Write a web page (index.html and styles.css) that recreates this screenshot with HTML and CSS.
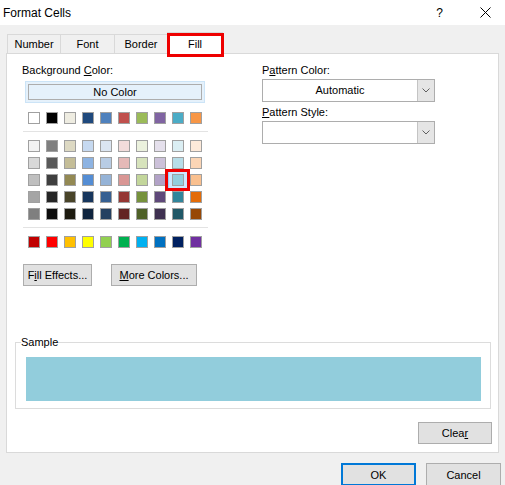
FILE: index.html
```html
<!DOCTYPE html>
<html>
<head>
<meta charset="utf-8">
<title>Format Cells</title>
<link rel="stylesheet" href="styles.css">
</head>
<body>
<div class="titlebar">
  <span class="title">Format Cells</span>
  <span class="help">?</span>
  <span class="close"><svg width="11" height="11" viewBox="0 0 11 11"><path d="M0.5 0.5L10.5 10.5M10.5 0.5L0.5 10.5" stroke="#000" stroke-width="1" fill="none"/></svg></span>
</div>
<div class="tabs">
  <div class="tab t-number">Number</div>
  <div class="tab t-font">Font</div>
  <div class="tab t-border">Border</div>
  <div class="tab t-fill active">Fill<span class="tab-mark"></span></div>
</div>
<div class="panel">
  <div class="top">
    <div class="left">
      <div class="label">Background <u>C</u>olor:</div>
      <div class="nocolor"><div class="nocolor-inner">No Color</div></div>
      <div class="swatches theme">
        <div class="sw" style="background:#FFFFFF"></div>
        <div class="sw" style="background:#000000"></div>
        <div class="sw" style="background:#EEECE1"></div>
        <div class="sw" style="background:#1F497D"></div>
        <div class="sw" style="background:#4F81BD"></div>
        <div class="sw" style="background:#C0504D"></div>
        <div class="sw" style="background:#9BBB59"></div>
        <div class="sw" style="background:#8064A2"></div>
        <div class="sw" style="background:#4BACC6"></div>
        <div class="sw" style="background:#F79646"></div>
      </div>
      <div class="sep"></div>
      <div class="swatches tints">
        <div class="sw" style="background:#F2F2F2"></div>
        <div class="sw" style="background:#7F7F7F"></div>
        <div class="sw" style="background:#DDD9C3"></div>
        <div class="sw" style="background:#C6D9F0"></div>
        <div class="sw" style="background:#DBE5F1"></div>
        <div class="sw" style="background:#F2DCDB"></div>
        <div class="sw" style="background:#EBF1DD"></div>
        <div class="sw" style="background:#E5E0EC"></div>
        <div class="sw" style="background:#DBEEF3"></div>
        <div class="sw" style="background:#FDEADA"></div>

        <div class="sw" style="background:#D8D8D8"></div>
        <div class="sw" style="background:#595959"></div>
        <div class="sw" style="background:#C4BD97"></div>
        <div class="sw" style="background:#8DB3E2"></div>
        <div class="sw" style="background:#B8CCE4"></div>
        <div class="sw" style="background:#E5B9B7"></div>
        <div class="sw" style="background:#D7E3BC"></div>
        <div class="sw" style="background:#CCC1D9"></div>
        <div class="sw" style="background:#B7DDE8"></div>
        <div class="sw" style="background:#FBD5B5"></div>

        <div class="sw" style="background:#BFBFBF"></div>
        <div class="sw" style="background:#3F3F3F"></div>
        <div class="sw" style="background:#938953"></div>
        <div class="sw" style="background:#548DD4"></div>
        <div class="sw" style="background:#95B3D7"></div>
        <div class="sw" style="background:#D99694"></div>
        <div class="sw" style="background:#C3D69B"></div>
        <div class="sw" style="background:#B2A2C7"></div>
        <div class="sw sel" style="background:#92CDDC"><span class="sel-mark"></span></div>
        <div class="sw" style="background:#FAC08F"></div>

        <div class="sw" style="background:#A5A5A5"></div>
        <div class="sw" style="background:#262626"></div>
        <div class="sw" style="background:#494429"></div>
        <div class="sw" style="background:#17365D"></div>
        <div class="sw" style="background:#366092"></div>
        <div class="sw" style="background:#953734"></div>
        <div class="sw" style="background:#76923C"></div>
        <div class="sw" style="background:#5F497A"></div>
        <div class="sw" style="background:#31859B"></div>
        <div class="sw" style="background:#E36C09"></div>

        <div class="sw" style="background:#7F7F7F"></div>
        <div class="sw" style="background:#0C0C0C"></div>
        <div class="sw" style="background:#1D1B10"></div>
        <div class="sw" style="background:#0F243E"></div>
        <div class="sw" style="background:#244061"></div>
        <div class="sw" style="background:#632423"></div>
        <div class="sw" style="background:#4F6128"></div>
        <div class="sw" style="background:#3F3151"></div>
        <div class="sw" style="background:#205867"></div>
        <div class="sw" style="background:#974806"></div>
      </div>
      <div class="sep"></div>
      <div class="swatches std">
        <div class="sw" style="background:#C00000"></div>
        <div class="sw" style="background:#FF0000"></div>
        <div class="sw" style="background:#FFC000"></div>
        <div class="sw" style="background:#FFFF00"></div>
        <div class="sw" style="background:#92D050"></div>
        <div class="sw" style="background:#00B050"></div>
        <div class="sw" style="background:#00B0F0"></div>
        <div class="sw" style="background:#0070C0"></div>
        <div class="sw" style="background:#002060"></div>
        <div class="sw" style="background:#7030A0"></div>
      </div>
      <div class="btnrow">
        <button class="btn fill-effects">F<u>i</u>ll Effects...</button>
        <button class="btn more-colors"><u>M</u>ore Colors...</button>
      </div>
    </div>
    <div class="right">
      <div class="label">P<u>a</u>ttern Color:</div>
      <div class="combo">
        <div class="combo-text">Automatic</div>
        <div class="combo-btn"><svg width="8" height="5" viewBox="0 0 8 5"><path d="M0.5 0.5L4 4L7.5 0.5" stroke="#606060" stroke-width="1" fill="none"/></svg></div>
      </div>
      <div class="label label2"><u>P</u>attern Style:</div>
      <div class="combo">
        <div class="combo-text"></div>
        <div class="combo-btn"><svg width="8" height="5" viewBox="0 0 8 5"><path d="M0.5 0.5L4 4L7.5 0.5" stroke="#606060" stroke-width="1" fill="none"/></svg></div>
      </div>
    </div>
  </div>
  <fieldset class="sample">
    <legend>Sample</legend>
    <div class="sample-fill"></div>
  </fieldset>
  <div class="clear-row">
    <button class="btn clear">Clea<u>r</u></button>
  </div>
</div>
<div class="footer">
  <button class="btn ok">OK</button>
  <button class="btn cancel">Cancel</button>
</div>
</body>
</html>
```

FILE: styles.css
```css
html, body {
  margin: 0;
  padding: 0;
}
body {
  width: 505px;
  height: 485px;
  overflow: hidden;
  background: #f0f0f0;
  font-family: "Liberation Sans", Arial, sans-serif;
  font-size: 11px;
  color: #000;
}
u {
  text-decoration-thickness: 1px;
  text-underline-offset: 1px;
}

/* title bar */
.titlebar {
  height: 25px;
  background: #fff;
  display: flex;
  align-items: center;
}
.title {
  margin-left: 3px;
  font-size: 12px;
}
.help {
  margin-left: auto;
  font-size: 12px;
}
.close {
  margin-left: 37px;
  margin-right: 14px;
  display: flex;
}

/* tabs */
.tabs {
  height: 28px;
  box-sizing: border-box;
  display: flex;
  align-items: flex-end;
  padding-left: 7px;
}
.tab {
  height: 19px;
  box-sizing: border-box;
  border-left: 1px solid #d9d9d9;
  border-top: 1px solid #d9d9d9;
  background: #f0f0f0;
  text-align: center;
  line-height: 17px;
  padding-top: 1px;
}
.t-number { width: 53px; }
.t-font { width: 54px; }
.t-border { width: 53px; }
.t-fill {
  width: 56px;
  height: 22px;
  margin-bottom: -1px;
  border-right: 1px solid #d9d9d9;
  background: #fff;
  padding-top: 3px;
  position: relative;
  z-index: 1;
}
.tab-mark {
  position: absolute;
  left: -1px;
  top: 0;
  width: 57px;
  height: 24px;
  box-sizing: border-box;
  border: 3px solid #ee0000;
}

/* panel */
.panel {
  margin-left: 6px;
  width: 493px;
  height: 400px;
  box-sizing: border-box;
  border: 1px solid #d9d9d9;
  background: #fff;
}
.top {
  display: flex;
}
.left {
  margin-left: 15px;
  width: 200px;
}
.right {
  margin-left: 40px;
  width: 173px;
}
.label {
  margin-top: 9px;
  line-height: 14px;
  height: 14px;
}
.label2 {
  margin-top: 3px;
}

.nocolor {
  margin-top: 4px;
  margin-left: 3px;
  width: 180px;
  height: 22px;
  box-sizing: border-box;
  border: 1px solid #cce4f7;
  background: #e5f1fb;
  padding: 2px;
}
.nocolor-inner {
  height: 100%;
  box-sizing: border-box;
  border: 1px solid #adadad;
  text-align: center;
  line-height: 14px;
}

.swatches {
  display: grid;
  grid-template-columns: repeat(10, 12px);
  column-gap: 6px;
  row-gap: 5px;
  margin-left: 6px;
}
.theme { margin-top: 9px; }
.tints, .std { margin-top: 8px; }
.sw {
  width: 12px;
  height: 12px;
  box-sizing: border-box;
  border: 1px solid #a0a0a0;
  position: relative;
}
.sw.sel {
  box-shadow: 0 0 0 3px #cce8ff, 0 0 0 4px #99d1ff;
}
.sel-mark {
  position: absolute;
  left: -8px;
  top: -6px;
  width: 25px;
  height: 22px;
  box-sizing: border-box;
  border: 3px solid #ee0000;
}
.sep {
  margin-top: 7px;
  margin-left: 1px;
  width: 185px;
  height: 1px;
  background: #e3e3e3;
}

.btn {
  font-family: inherit;
  font-size: 11px;
  color: #000;
  background: #e1e1e1;
  border: 1px solid #adadad;
  box-sizing: border-box;
  padding: 0;
  margin: 0;
  line-height: 14px;
}
.btnrow {
  margin-top: 16px;
  margin-left: 1px;
  display: flex;
  gap: 19px;
}
.fill-effects { width: 69px; height: 22px; }
.more-colors { width: 86px; height: 22px; }

/* combo */
.combo {
  margin-top: 2px;
  height: 23px;
  box-sizing: border-box;
  border: 1px solid #adadad;
  display: flex;
  background: #fff;
}
.combo-text {
  flex: 1;
  text-align: center;
  line-height: 21px;
}
.combo-btn {
  width: 16px;
  background: #e5e5e5;
  border-left: 1px solid #c4c4c4;
  display: flex;
  align-items: center;
  justify-content: center;
}

/* sample */
.sample {
  margin: 49px 0 0 8px;
  width: 476px;
  box-sizing: border-box;
  border: 1px solid #dcdcdc;
  padding: 8px 9px 7px 10px;
  min-width: 0;
}
.sample legend {
  padding: 0;
  margin-left: -5px;
  line-height: 14px;
  font-size: 11px;
}
.sample-fill {
  height: 44px;
  background: #92cddc;
}

.clear-row {
  margin-top: 13px;
  margin-right: 6px;
  display: flex;
  justify-content: flex-end;
}
.clear { width: 74px; height: 22px; }

/* footer */
.footer {
  margin-top: 10px;
  padding-right: 4px;
  display: flex;
  justify-content: flex-end;
  gap: 10px;
}
.ok, .cancel {
  width: 75px;
  height: 23px;
}
.ok {
  border: 2px solid #0078d7;
}
```
